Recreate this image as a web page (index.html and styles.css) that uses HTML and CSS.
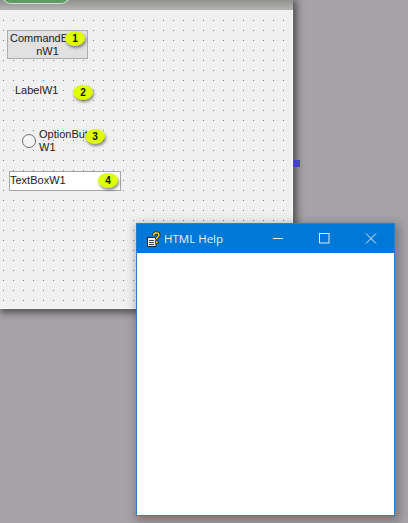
FILE: index.html
```html
<!DOCTYPE html>
<html lang="en">
<head>
<meta charset="utf-8">
<title>HTML Help</title>
<link rel="stylesheet" href="styles.css">
</head>
<body>
<div class="desktop">
  <section class="form">
    <div class="form-title"><div class="green-tab"></div></div>
    <div class="canvas">
      <div class="ctl command"><span class="cmd-first">CommandB</span><span class="cmd-second">nW1</span></div>
      <span class="ctl label">LabelW1</span>
      <div class="ctl option"><span class="radio"></span><span class="option-text">OptionBut<br>W1</span></div>
      <div class="ctl textbox">TextBoxW1</div>
      <span class="badge b1">1</span>
      <span class="badge b2">2</span>
      <span class="badge b3">3</span>
      <span class="badge b4">4</span>
    </div>
  </section>
  <div class="handle"></div>
  <section class="help">
    <header class="help-title">
      <svg class="help-icon" width="14" height="16" viewBox="0 0 14 16">
        <path d="M.5 6.500h7l1.500 1.500v7.500H.5z" fill="#f4f4f4" stroke="#222" stroke-width="1"/>
        <path d="M2 9.500h5M2 11.500h5M2 13.500h5" stroke="#444" stroke-width="1"/>
        <path d="M6.500 4.500c0-3 5-3.500 5.500-.8.300 1.800-2.300 2.300-2.500 4.300" fill="none" stroke="#222" stroke-width="3"/>
        <path d="M6.500 4.500c0-3 5-3.500 5.500-.8.300 1.800-2.300 2.300-2.500 4.300" fill="none" stroke="#ffe600" stroke-width="1.400"/>
        <rect x="8.500" y="10" width="2.500" height="2.500" fill="#ffe600" stroke="#222" stroke-width=".7"/>
      </svg>
      <span class="help-name">HTML Help</span>
      <div class="caption-buttons">
        <svg class="cap" width="46" height="29" viewBox="0 0 46 29"><path d="M17 14.500h10" stroke="#dcecf9" stroke-width="1"/></svg>
        <svg class="cap" width="46" height="29" viewBox="0 0 46 29"><rect x="17.500" y="9.500" width="9.500" height="9.500" fill="none" stroke="#dcecf9" stroke-width="1"/></svg>
        <svg class="cap" width="46" height="29" viewBox="0 0 46 29"><path d="M18 9.500l10 10M28 9.500l-10 10" stroke="#dcecf9" stroke-width="1"/></svg>
      </div>
    </header>
    <div class="help-body"></div>
  </section>
</div>
</body>
</html>
```
FILE: styles.css
```css
html, body {
  margin: 0;
  padding: 0;
}
body {
  width: 408px;
  height: 523px;
  overflow: hidden;
  font-family: "Liberation Sans", Arial, sans-serif;
}
.desktop {
  position: relative;
  width: 408px;
  height: 523px;
  overflow: hidden;
  background: #a6a3a8;
}
.form {
  position: absolute;
  left: 0;
  top: 0;
  width: 293px;
  height: 309px;
  display: flex;
  flex-direction: column;
  box-shadow: 2px 2px 7px 2px rgba(30, 30, 30, .6);
}
.form-title {
  height: 10px;
  background: linear-gradient(#8f928e, #b5b5b2);
  position: relative;
}
.green-tab {
  position: absolute;
  left: 2px;
  top: -6px;
  width: 66px;
  height: 9px;
  background: #5f9c63;
  border: 1px solid #d4dcd2;
  border-top: 0;
  border-radius: 0 0 9px 9px;
}
.canvas {
  position: relative;
  flex: 1;
  background-color: #f0f0f0;
  background-image: radial-gradient(circle at 3.500px 0.500px, #808080 0.600px, transparent 0.900px);
  background-size: 10px 10px;
  background-position: 0 9px;
  border-top: 1px solid #f0f0f0;
  border-bottom: 1px solid #fbfbfb;
  border-right: 1px solid #fbfbfb;
  font-size: 11px;
  color: #202020;
  line-height: 14px;
}
.ctl {
  position: absolute;
}
.command {
  left: 7px;
  top: 19px;
  width: 81px;
  height: 29px;
  box-sizing: border-box;
  display: flex;
  flex-direction: column;
  background: #e1e1e1;
  border: 1px solid #adadad;
  color: #202020;
  line-height: 13px;
  padding-top: 1px;
}
.cmd-first {
  padding-left: 2px;
}
.cmd-second {
  text-align: center;
}
.label {
  left: 15px;
  top: 72px;
}
.option {
  left: 22px;
  top: 117px;
  display: flex;
  align-items: center;
  gap: 3px;
  line-height: 13px;
}
.option-text {
  position: relative;
  top: 0;
}
.radio {
  width: 12px;
  height: 12px;
  border: 1px solid #6e6e6e;
  border-radius: 50%;
  background: #f4f4f4;
}
.textbox {
  left: 9px;
  top: 160px;
  width: 112px;
  height: 20px;
  box-sizing: border-box;
  padding: 1px 0 0 0;
  background: #fff;
  border: 1px solid #a5a5a5;
}
.badge {
  position: absolute;
  width: 20px;
  height: 15px;
  border-radius: 50%;
  background: #dfff00;
  box-shadow: 1px 2px 3px rgba(0, 0, 0, .45);
  font-size: 10px;
  font-weight: 700;
  line-height: 15px;
  text-align: center;
  color: #111;
}
.b1 { left: 65px; top: 20px; }
.b2 { left: 73px; top: 74px; }
.b3 { left: 85px; top: 118px; }
.b4 { left: 98px; top: 162px; }
.handle {
  position: absolute;
  left: 293px;
  top: 160px;
  width: 7px;
  height: 7px;
  background: #4343c9;
}
.help {
  position: absolute;
  left: 136px;
  top: 223px;
  width: 259px;
  height: 293px;
  box-sizing: border-box;
  display: flex;
  flex-direction: column;
  border: 1px solid #2b7ec9;
  box-shadow: 2px 3px 9px 2px rgba(50, 50, 50, .4);
}
.help-title {
  height: 29px;
  flex: none;
  display: flex;
  align-items: center;
  background: #0078d7;
  color: #e6f2fb;
}
.help-icon {
  margin-left: 10px;
  flex: none;
}
.help-name {
  margin-left: 3px;
  font-family: "Open Sans", sans-serif;
  font-size: 11.500px;
}
.caption-buttons {
  margin-left: auto;
  display: flex;
}
.cap {
  display: block;
}
.help-body {
  flex: 1;
  background: #fff;
}
```
